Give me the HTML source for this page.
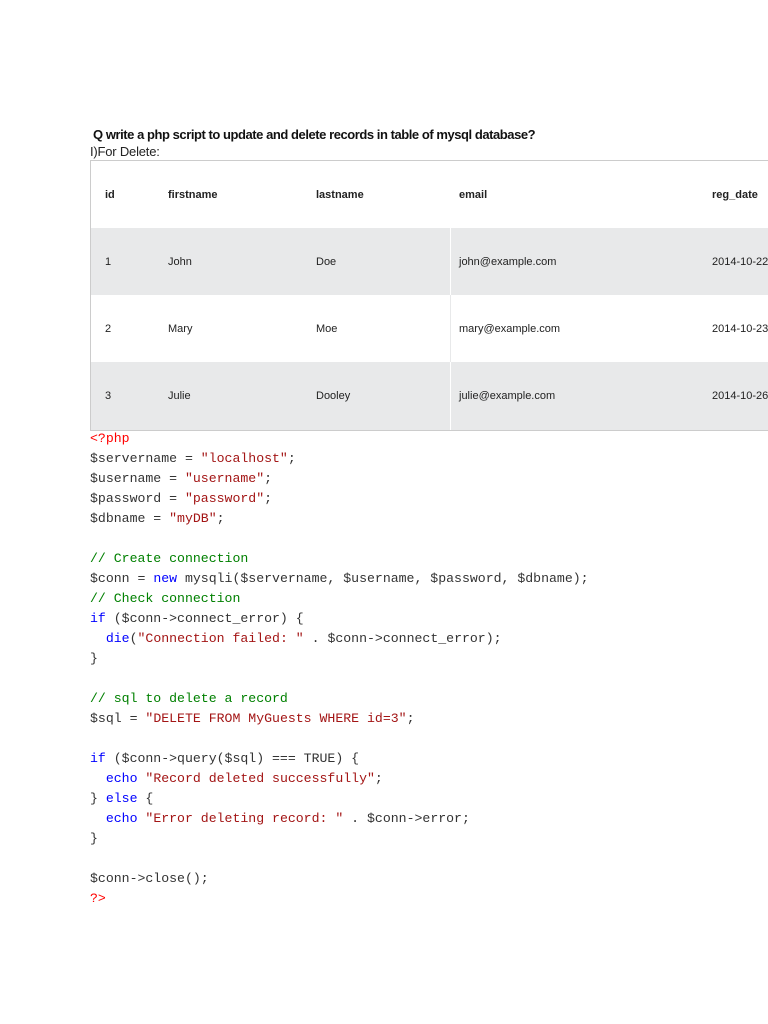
<!DOCTYPE html>
<html><head><style>
body{margin:0;width:768px;height:1024px;background:#fff;position:relative;overflow:hidden;font-family:"Liberation Sans",sans-serif}
.t{position:absolute;white-space:pre}
.q{left:93px;top:127px;font-size:13px;font-weight:bold;color:#111;letter-spacing:-0.45px}
.s{left:90px;top:144px;font-size:13px;color:#222;letter-spacing:-0.2px}
.tb{position:absolute;left:90px;top:160px;width:690px;height:269px;border:1px solid #ccc;border-right:none}
.row{position:absolute;left:0;width:690px;height:67px}
.g{background:#e8e9ea}
.c{position:absolute;font-size:11px;color:#222}
.h{font-weight:bold}
.vs{position:absolute;left:359px;width:1px;background:#fff}
pre{position:absolute;left:90px;top:429px;margin:0;font-family:"Liberation Mono",monospace;font-size:13.2px;line-height:20px;color:#333}
.r{color:#f00}.st{color:#a31515}.k{color:#0000ff}.cm{color:#008000}
</style></head><body>
<div class="t q">Q write a php script to update and delete records in table of mysql database?</div>
<div class="t s">I)For Delete:</div>
<div class="tb">
<div class="row" style="top:0"><span class="c h" style="left:14px;top:28px">id</span><span class="c h" style="left:77px;top:28px">firstname</span><span class="c h" style="left:225px;top:28px">lastname</span><span class="c h" style="left:368px;top:28px">email</span><span class="c h" style="left:621px;top:28px">reg_date</span></div>
<div class="row g" style="top:67px"><span class="c" style="left:14px;top:28px">1</span><span class="c" style="left:77px;top:28px">John</span><span class="c" style="left:225px;top:28px">Doe</span><span class="c" style="left:368px;top:28px">john@example.com</span><span class="c" style="left:621px;top:28px">2014-10-22</span><div class="vs" style="top:0;height:67px"></div></div>
<div class="row" style="top:134px"><span class="c" style="left:14px;top:28px">2</span><span class="c" style="left:77px;top:28px">Mary</span><span class="c" style="left:225px;top:28px">Moe</span><span class="c" style="left:368px;top:28px">mary@example.com</span><span class="c" style="left:621px;top:28px">2014-10-23</span><div class="vs" style="top:0;height:67px;background:#e8e9ea"></div></div>
<div class="row g" style="top:201px;height:68px"><span class="c" style="left:14px;top:28px">3</span><span class="c" style="left:77px;top:28px">Julie</span><span class="c" style="left:225px;top:28px">Dooley</span><span class="c" style="left:368px;top:28px">julie@example.com</span><span class="c" style="left:621px;top:28px">2014-10-26</span><div class="vs" style="top:0;height:68px"></div></div>
</div>
<pre><span class="r">&lt;?php</span>
$servername = <span class="st">"localhost"</span>;
$username = <span class="st">"username"</span>;
$password = <span class="st">"password"</span>;
$dbname = <span class="st">"myDB"</span>;

<span class="cm">// Create connection</span>
$conn = <span class="k">new</span> mysqli($servername, $username, $password, $dbname);
<span class="cm">// Check connection</span>
<span class="k">if</span> ($conn-&gt;connect_error) {
  <span class="k">die</span>(<span class="st">"Connection failed: "</span> . $conn-&gt;connect_error);
}

<span class="cm">// sql to delete a record</span>
$sql = <span class="st">"DELETE FROM MyGuests WHERE id=3"</span>;

<span class="k">if</span> ($conn-&gt;query($sql) === TRUE) {
  <span class="k">echo</span> <span class="st">"Record deleted successfully"</span>;
} <span class="k">else</span> {
  <span class="k">echo</span> <span class="st">"Error deleting record: "</span> . $conn-&gt;error;
}

$conn-&gt;close();
<span class="r">?&gt;</span></pre>
</body></html>
